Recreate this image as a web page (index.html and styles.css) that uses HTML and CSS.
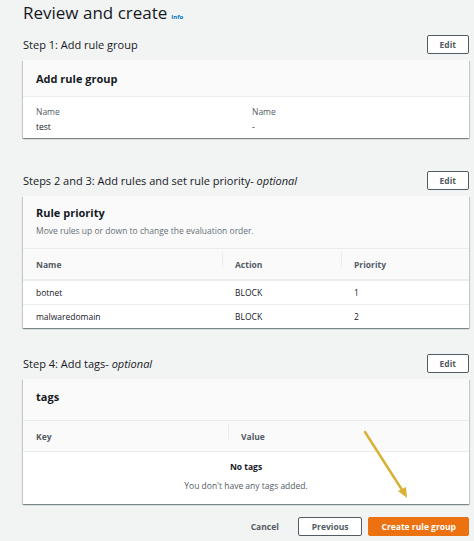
FILE: index.html
```html
<!DOCTYPE html>
<html lang="en">
<head>
    <meta charset="UTF-8">
    <meta name="viewport" content="width=device-width, initial-scale=1.0">
    <title>Review and create</title>
    <link rel="stylesheet" href="styles.css">
</head>
<body>
    <div class="page">
        <header class="page-head">
            <h1>Review and create</h1>
            <a class="info" href="#">Info</a>
        </header>

        <!-- Paso 1 -->
        <section class="step step1">
            <div class="step-head">
                <h2>Step 1: Add rule group</h2>
                <button class="btn">Edit</button>
            </div>
            <div class="card">
                <div class="card-head head1">
                    <h3>Add rule group</h3>
                </div>
                <div class="kv">
                    <div class="kv-col">
                        <span class="kv-label">Name</span>
                        <span class="kv-value">test</span>
                    </div>
                    <div class="kv-col">
                        <span class="kv-label">Name</span>
                        <span class="kv-value">-</span>
                    </div>
                </div>
            </div>
        </section>

        <!-- Pasos 2 y 3 -->
        <section class="step step2">
            <div class="step-head">
                <h2>Steps 2 and 3: Add rules and set rule priority- <em>optional</em></h2>
                <button class="btn">Edit</button>
            </div>
            <div class="card">
                <div class="card-head head2">
                    <h3>Rule priority</h3>
                    <p class="desc">Move rules up or down to change the evaluation order.</p>
                </div>
                <div class="table rules">
                    <div class="row th">
                        <div class="cell">Name</div>
                        <div class="cell">Action</div>
                        <div class="cell">Priority</div>
                    </div>
                    <div class="row">
                        <div class="cell">botnet</div>
                        <div class="cell">BLOCK</div>
                        <div class="cell">1</div>
                    </div>
                    <div class="row">
                        <div class="cell">malwaredomain</div>
                        <div class="cell">BLOCK</div>
                        <div class="cell">2</div>
                    </div>
                </div>
            </div>
        </section>

        <!-- Paso 4 -->
        <section class="step step4">
            <div class="step-head">
                <h2>Step 4: Add tags- <em>optional</em></h2>
                <button class="btn">Edit</button>
            </div>
            <div class="card">
                <div class="card-head head3">
                    <h3>tags</h3>
                </div>
                <div class="table tags">
                    <div class="row th">
                        <div class="cell">Key</div>
                        <div class="cell">Value</div>
                    </div>
                </div>
                <div class="empty">
                    <strong>No tags</strong>
                    <span>You don't have any tags added.</span>
                </div>
            </div>
        </section>

        <div class="actions">
            <button class="btn-link">Cancel</button>
            <button class="btn">Previous</button>
            <button class="btn primary">Create rule group</button>
        </div>

        <svg class="arrow" width="60" height="80" viewBox="0 0 60 80">
            <line x1="5" y1="5" x2="44" y2="66" stroke="#d8b236" stroke-width="2.5" stroke-linecap="round"/>
            <polygon points="47,71 38,64 46,60" fill="#d8b236"/>
        </svg>
    </div>
</body>
</html>
```

FILE: styles.css
```css
/* Estilos generales */
body {
    margin: 0;
    font-family: "Open Sans", "Liberation Sans", sans-serif;
    background-color: #f2f3f3;
    color: #16191f;
}

.page {
    position: relative;
    width: 446px;
    padding: 3px 5px 0 23px;
}

.page-head {
    display: flex;
    align-items: baseline;
    gap: 4px;
    height: 20px;
}

h1 {
    font-size: 17px;
    font-weight: 400;
    line-height: 20px;
    margin: 0;
}

.info {
    font-size: 6px;
    font-weight: bold;
    color: #0073bb;
    text-decoration: none;
}

.step-head {
    display: flex;
    justify-content: space-between;
    align-items: center;
    height: 18px;
    margin-bottom: 7px;
}

h2 {
    font-size: 11px;
    font-weight: 400;
    margin: 0;
}

.step1 {
    margin-top: 12px;
}

.step2 {
    margin-top: 33px;
}

.step4 {
    margin-top: 26px;
}

.btn {
    font-family: inherit;
    font-size: 8.5px;
    font-weight: bold;
    color: #545b64;
    background: #fff;
    border: 1px solid #545b64;
    border-radius: 2px;
    height: 19px;
    padding: 0 12px;
    cursor: pointer;
}

/* Tarjetas */
.card {
    background: #fff;
    box-shadow: 0 1px 1px 0 rgba(0, 28, 36, 0.3), 1px 1px 1px 0 rgba(0, 28, 36, 0.15), -1px 1px 1px 0 rgba(0, 28, 36, 0.15);
}

.card-head {
    background: #fafafa;
    border-bottom: 1px solid #eaeded;
    padding: 0 13px;
}

.head1 {
    padding-top: 12px;
    padding-bottom: 10px;
}

.head2 {
    padding-top: 10px;
    padding-bottom: 11px;
}

.head3 {
    padding-top: 11px;
    padding-bottom: 16px;
}

h3 {
    font-size: 11px;
    font-weight: bold;
    line-height: 14px;
    margin: 0;
}

.desc {
    font-size: 8.5px;
    line-height: 12px;
    color: #687078;
    margin: 5px 0 0;
}

.kv {
    display: grid;
    grid-template-columns: 216px 1fr;
    padding: 7px 13px 4px;
    font-size: 8.5px;
}

.kv-col {
    display: flex;
    flex-direction: column;
}

.kv-label {
    color: #545b64;
    line-height: 15px;
}

.kv-value {
    line-height: 15px;
}

/* Tablas */
.table {
    font-size: 8.5px;
}

.row {
    display: grid;
    height: 23px;
    align-items: center;
    border-top: 1px solid #eaeded;
}

.row:first-child {
    border-top: none;
}

.rules .row {
    grid-template-columns: 199px 119px 1fr;
}

.tags .row {
    grid-template-columns: 205px 1fr;
}

.row.th {
    height: 30px;
    background: #fafafa;
    font-weight: bold;
    color: #545b64;
    border-bottom: 1px solid #eaeded;
}

.cell {
    position: relative;
    padding-left: 13px;
}

.th .cell + .cell::before {
    content: '';
    position: absolute;
    left: 0;
    top: -7px;
    height: 15px;
    border-left: 1px solid #eaeded;
}

.empty {
    display: flex;
    flex-direction: column;
    align-items: center;
    padding: 5px 0 9px;
    font-size: 8.5px;
    line-height: 19px;
    color: #545b64;
}

.empty strong {
    color: #16191f;
}

/* Botones finales */
.actions {
    display: flex;
    justify-content: flex-end;
    align-items: center;
    gap: 6px;
    margin-top: 13px;
}

.btn-link {
    font-family: inherit;
    font-size: 8.5px;
    font-weight: bold;
    color: #545b64;
    background: none;
    border: none;
    padding: 0 13px 0 0;
}

.actions .btn {
    padding: 0 13px;
}

.actions .btn.primary {
    background: #ec7211;
    border-color: #ec7211;
    color: #fff;
    padding: 0 12px;
}

.arrow {
    position: absolute;
    left: 360px;
    top: 427px;
}
```
